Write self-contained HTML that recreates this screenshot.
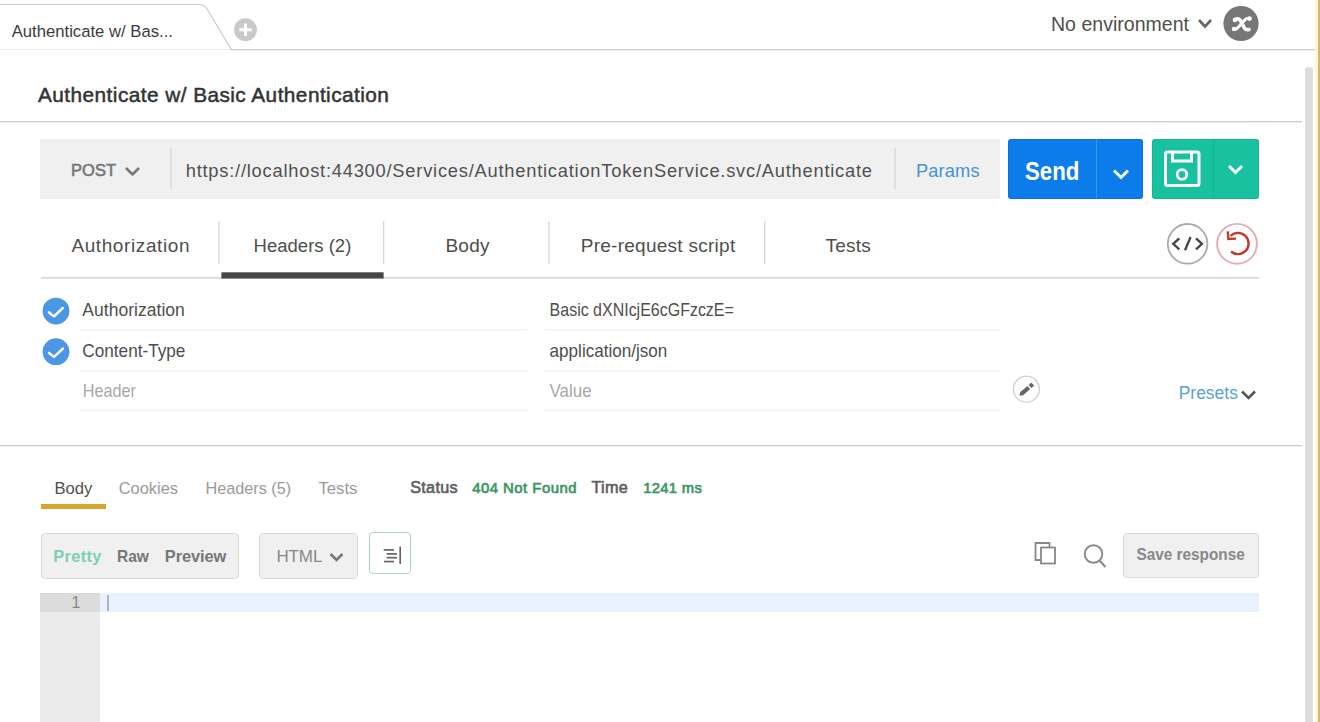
<!DOCTYPE html>
<html><head><meta charset="utf-8">
<style>
html,body{margin:0;padding:0;background:#fff;width:1320px;height:722px;overflow:hidden;position:relative}
.t{position:absolute;white-space:nowrap;line-height:1;font-family:"Liberation Sans",sans-serif}
.b{position:absolute}
.s{position:absolute}
</style></head><body>
<svg class="s" width="1320" height="722" style="left:0;top:0">
<path d="M0 49.5 L231 49.5" stroke="#ececec" stroke-width="1" fill="none"/>
<path d="M0 4.5 L200 4.5 Q204.5 4.8 207 9 L231.5 49.7 L1316 49.7" stroke="#c9c9c9" stroke-width="1.2" fill="none"/>
<circle cx="245.5" cy="29.7" r="11.5" fill="#c9c9c9"/>
<path d="M245.5 23.5 V35.9 M239.3 29.7 H251.7" stroke="#fff" stroke-width="3"/>
<path d="M1199 20 L1205 26.5 L1211 20" stroke="#666" stroke-width="2.6" fill="none"/>
<circle cx="1241" cy="23.5" r="17.6" fill="#767676"/>
<line x1="0" y1="121.7" x2="1302" y2="121.7" stroke="#c8c8c8" stroke-width="1.2"/>
<line x1="0" y1="445.7" x2="1302" y2="445.7" stroke="#c8c8c8" stroke-width="1.2"/>
</svg>
<svg class="s" width="1320" height="722" style="left:0;top:0">
<path d="M1235 19.5 Q1239.5 17.5 1241.5 22.5 L1244.5 28 Q1246 30.5 1249 29.5" stroke="#fff" stroke-width="3.6" fill="none" stroke-linecap="round"/>
<path d="M1249.5 18.5 Q1246.5 17.8 1244 20.8 L1238 27.5 Q1236 30 1233.8 29.2" stroke="#fff" stroke-width="3" fill="none" stroke-linecap="round"/>
<circle cx="1235" cy="20" r="2.3" fill="#fff"/><circle cx="1249.5" cy="18.6" r="2.4" fill="#fff"/><circle cx="1234" cy="29" r="2.2" fill="#fff"/>
</svg>
<div class="b" style="left:1305px;top:67px;width:8.299999999999955px;height:655px;background:#dddddd;border-radius:3px 3px 0 0"></div>
<div class="b" style="left:1315px;top:0px;width:3px;height:722px;background:#fbf6dc"></div>
<div class="b" style="left:1318px;top:0px;width:2px;height:722px;background:#d9b86c"></div>
<div class="b" style="left:40.3px;top:138.6px;width:959.5px;height:60.599999999999994px;background:#f0f0f0"></div>
<svg class="s" width="1320" height="722" style="left:0;top:0">
<path d="M126 168 L132.5 174.5 L139 168" stroke="#777" stroke-width="2.6" fill="none"/>
<line x1="171" y1="148" x2="171" y2="189" stroke="#d9d9d9" stroke-width="1.5"/>
<line x1="895" y1="148" x2="895" y2="189" stroke="#d9d9d9" stroke-width="1.5"/>
</svg>
<div class="b" style="left:1008px;top:139px;width:135.20000000000005px;height:60px;background:#0b7ce9;border-radius:3px;box-shadow:inset 0 0 0 1px rgba(0,40,90,0.12)"></div>
<div class="b" style="left:1096px;top:139px;width:1px;height:60px;background:#3a94ee"></div>
<div class="b" style="left:1152.4px;top:139px;width:106.39999999999986px;height:60px;background:#18c19f;border-radius:3px;box-shadow:inset 0 0 0 1px rgba(0,60,40,0.08)"></div>
<div class="b" style="left:1213px;top:139px;width:1px;height:60px;background:#14b393"></div>
<svg class="s" width="1320" height="722" style="left:0;top:0">
<path d="M1114 170.5 L1121 177.5 L1128 170.5" stroke="#fff" stroke-width="3" fill="none"/>
<path d="M1229 166 L1235.5 172.5 L1242 166" stroke="#fff" stroke-width="3" fill="none"/>
<rect x="1165.5" y="152" width="33.5" height="33.5" rx="2" stroke="#fff" stroke-width="3" fill="none"/>
<path d="M1172.5 152 V161 H1191.5 V152" stroke="#fff" stroke-width="3" fill="none"/>
<circle cx="1182" cy="174.5" r="4.8" stroke="#fff" stroke-width="2.8" fill="none"/>
</svg>
<svg class="s" width="1320" height="722" style="left:0;top:0">
<line x1="219" y1="221" x2="219" y2="264" stroke="#dcdcdc" stroke-width="1.5"/>
<line x1="383.6" y1="221" x2="383.6" y2="264" stroke="#dcdcdc" stroke-width="1.5"/>
<line x1="548.9" y1="221" x2="548.9" y2="264" stroke="#dcdcdc" stroke-width="1.5"/>
<line x1="764.8" y1="221" x2="764.8" y2="264" stroke="#dcdcdc" stroke-width="1.5"/>
<line x1="41" y1="277.8" x2="1259" y2="277.8" stroke="#cbcbcb" stroke-width="1.2"/>
<rect x="221.4" y="272.3" width="162.2" height="6.2" fill="#464646"/>
<circle cx="1187.6" cy="243.8" r="19.8" stroke="#ababab" stroke-width="1.8" fill="#fff"/>
<path d="M1179.3 238.3 L1173.2 243.8 L1179.3 249.3 M1196 238.3 L1202 243.8 L1196 249.3 M1190.6 237 L1185 250.3" stroke="#444" stroke-width="2.3" fill="none"/>
<circle cx="1237" cy="243.8" r="19.9" stroke="#e8abb3" stroke-width="1.9" fill="#fff"/>
<path d="M1230.5 236 A10.6 10.6 0 1 1 1231 251.5" stroke="#c4392c" stroke-width="2.4" fill="none"/>
<path d="M1227.8 231.3 L1228.4 239 L1236 238.6" stroke="#c4392c" stroke-width="2.4" fill="none"/>
</svg>
<svg class="s" width="1320" height="722" style="left:0;top:0">
<circle cx="56" cy="311.1" r="13.4" fill="#4b97e5"/>
<path d="M49 312.3 Q52 315.3 54.2 316.2 L62.8 308" stroke="#fff" stroke-width="2.5" fill="none" stroke-linecap="round"/>
<circle cx="56" cy="351.7" r="13.4" fill="#4b97e5"/>
<path d="M49 352.9 Q52 355.9 54.2 356.8 L62.8 348.6" stroke="#fff" stroke-width="2.5" fill="none" stroke-linecap="round"/>
<g stroke="#f2f2f2" stroke-width="1.4">
<line x1="80" y1="330" x2="527.6" y2="330"/><line x1="544.3" y1="330" x2="1000" y2="330"/>
<line x1="80" y1="371" x2="527.6" y2="371"/><line x1="544.3" y1="371" x2="1000" y2="371"/>
<line x1="80" y1="410.5" x2="527.6" y2="410.5"/><line x1="544.3" y1="410.5" x2="1000" y2="410.5"/>
</g>
<circle cx="1026.4" cy="389.2" r="13" stroke="#cfcfcf" stroke-width="1.3" fill="#fff"/>
<g transform="translate(1019.3 395.8) rotate(-41)" fill="#666">
<path d="M0 0 L3.2 -2.1 L12.6 -2.1 L12.6 2.1 L3.2 2.1 Z"/>
<rect x="14.2" y="-2.1" width="3.6" height="4.2"/>
</g>
<path d="M1242 391.5 L1248.5 398 L1255 391.5" stroke="#555" stroke-width="2.6" fill="none"/>
</svg>
<div class="b" style="left:41px;top:503.5px;width:64.6px;height:5.800000000000011px;background:#d6a52a"></div>
<div class="b" style="left:40.5px;top:532.5px;width:198.0px;height:46.799999999999955px;background:#f0f0f0;border:1.3px solid #d9d9d9;border-radius:4px;box-sizing:border-box"></div>
<div class="b" style="left:259.4px;top:532.5px;width:98.80000000000001px;height:46.799999999999955px;background:#f0f0f0;border:1.3px solid #d9d9d9;border-radius:4px;box-sizing:border-box"></div>
<div class="b" style="left:369.3px;top:531.8px;width:42.19999999999999px;height:42.0px;background:#fff;border:1.8px solid #a6d5ca;border-radius:4px;box-sizing:border-box"></div>
<svg class="s" width="1320" height="722" style="left:0;top:0">
<path d="M330.5 554 L336.5 560 L342.5 554" stroke="#777" stroke-width="2.6" fill="none"/>
<g stroke="#666" stroke-width="1.7">
<line x1="383.7" y1="549.9" x2="394" y2="549.9"/>
<line x1="386.6" y1="553.9" x2="397" y2="553.9"/>
<line x1="386.6" y1="557.7" x2="397" y2="557.7"/>
<line x1="384" y1="561.6" x2="394" y2="561.6"/>
<line x1="400.2" y1="546.5" x2="400.2" y2="564"/>
</g>
<g stroke="#888" stroke-width="1.8" fill="#fff">
<path d="M1040.5 560 H1035.5 V543 H1049.5 V547"/>
<rect x="1041" y="547.5" width="14" height="16"/>
</g>
<circle cx="1093.5" cy="554" r="8.8" stroke="#888" stroke-width="1.9" fill="none"/>
<path d="M1099.5 560.5 L1105.5 567" stroke="#888" stroke-width="2" fill="none"/>
</svg>
<div class="b" style="left:1122.8px;top:532.6px;width:135.79999999999995px;height:45.10000000000002px;background:#f0f0f0;border:1.3px solid #d9d9d9;border-radius:4px;box-sizing:border-box"></div>
<div class="b" style="left:40px;top:592.7px;width:60.3px;height:129.29999999999995px;background:#ebebeb"></div>
<div class="b" style="left:40px;top:592.7px;width:60.3px;height:19.699999999999932px;background:#dcdcdc"></div>
<div class="b" style="left:100.3px;top:592.7px;width:1158.7px;height:19.699999999999932px;background:#e8f1fd"></div>
<div class="b" style="left:107.2px;top:595px;width:1.7999999999999972px;height:16px;background:#aab3d3"></div>
<svg class="s" width="1320" height="722" style="left:0;top:0;font-family:'Liberation Sans',sans-serif">
<text x="0" y="0" transform="translate(11.70 36.90) scale(0.9639 1)" font-size="17.3" font-weight="400" fill="#3c3c3c" letter-spacing="0.000">Authenticate w/ Bas...</text>
<text x="1051.00" y="30.70" font-size="19.5" font-weight="400" fill="#4e4e4e" letter-spacing="0.025">No environment</text>
<text x="38.00" y="101.80" font-size="20.8" font-weight="400" fill="#333" letter-spacing="0.447" stroke="#333" stroke-width="0.5">Authenticate w/ Basic Authentication</text>
<text x="71.00" y="175.80" font-size="16.5" font-weight="400" fill="#777" letter-spacing="0.026" stroke="#777" stroke-width="0.6">POST</text>
<text x="185.70" y="176.70" font-size="18.3" font-weight="400" fill="#505050" letter-spacing="0.777">https://localhost:44300/Services/AuthenticationTokenService.svc/Authenticate</text>
<text x="916.00" y="176.70" font-size="18.3" font-weight="400" fill="#4a90d0" letter-spacing="0.111">Params</text>
<text x="0" y="0" transform="translate(1025.00 179.60) scale(0.8900 1)" font-size="25" font-weight="700" fill="#fff" letter-spacing="0.000">Send</text>
<text x="71.40" y="252.00" font-size="19" font-weight="400" fill="#4e4e4e" letter-spacing="0.599">Authorization</text>
<text x="0" y="0" transform="translate(253.60 252.00) scale(0.9749 1)" font-size="19" font-weight="400" fill="#4e4e4e" letter-spacing="0.000">Headers (2)</text>
<text x="445.50" y="252.00" font-size="19" font-weight="400" fill="#4e4e4e" letter-spacing="0.193">Body</text>
<text x="580.70" y="252.00" font-size="19" font-weight="400" fill="#4e4e4e" letter-spacing="0.267">Pre-request script</text>
<text x="825.40" y="252.00" font-size="19" font-weight="400" fill="#4e4e4e" letter-spacing="0.259">Tests</text>
<text x="82.30" y="315.80" font-size="17.5" font-weight="400" fill="#4e4e4e" letter-spacing="0.029">Authorization</text>
<text x="0" y="0" transform="translate(82.30 357.00) scale(0.9824 1)" font-size="17.5" font-weight="400" fill="#4e4e4e" letter-spacing="0.000">Content-Type</text>
<text x="0" y="0" transform="translate(82.70 396.60) scale(0.9286 1)" font-size="17.5" font-weight="400" fill="#a8a8a8" letter-spacing="0.000">Header</text>
<text x="0" y="0" transform="translate(549.60 315.80) scale(0.9137 1)" font-size="17.5" font-weight="400" fill="#4e4e4e" letter-spacing="0.000">Basic dXNIcjE6cGFzczE=</text>
<text x="0" y="0" transform="translate(549.60 357.00) scale(0.9763 1)" font-size="17.5" font-weight="400" fill="#4e4e4e" letter-spacing="0.000">application/json</text>
<text x="0" y="0" transform="translate(549.60 396.60) scale(0.9668 1)" font-size="17.5" font-weight="400" fill="#a8a8a8" letter-spacing="0.000">Value</text>
<text x="0" y="0" transform="translate(1178.70 398.90) scale(0.9702 1)" font-size="18" font-weight="400" fill="#5b9fd6" letter-spacing="0.000">Presets</text>
<text x="0" y="0" transform="translate(54.40 494.20) scale(0.9664 1)" font-size="17.2" font-weight="400" fill="#4e4e4e" letter-spacing="0.000">Body</text>
<text x="0" y="0" transform="translate(118.80 494.20) scale(0.9528 1)" font-size="17.2" font-weight="400" fill="#9a9a9a" letter-spacing="0.000">Cookies</text>
<text x="0" y="0" transform="translate(205.50 494.20) scale(0.9437 1)" font-size="17.2" font-weight="400" fill="#9a9a9a" letter-spacing="0.000">Headers (5)</text>
<text x="0" y="0" transform="translate(318.50 494.20) scale(0.9711 1)" font-size="17.2" font-weight="400" fill="#9a9a9a" letter-spacing="0.000">Tests</text>
<text x="410.20" y="493.40" font-size="16.2" font-weight="400" fill="#5e5e5e" letter-spacing="0.315" stroke="#5e5e5e" stroke-width="0.6">Status</text>
<text x="472.20" y="493.30" font-size="14.9" font-weight="400" fill="#3a9660" letter-spacing="0.478" stroke="#3a9660" stroke-width="0.65">404 Not Found</text>
<text x="591.50" y="493.40" font-size="16.2" font-weight="400" fill="#5e5e5e" letter-spacing="0.334" stroke="#5e5e5e" stroke-width="0.6">Time</text>
<text x="643.20" y="493.30" font-size="14.8" font-weight="400" fill="#3a9660" letter-spacing="0.307" stroke="#3a9660" stroke-width="0.65">1241 ms</text>
<text x="53.30" y="562.40" font-size="16.4" font-weight="700" fill="#7dcfb6" letter-spacing="0.341">Pretty</text>
<text x="0" y="0" transform="translate(117.00 562.40) scale(0.9483 1)" font-size="16.4" font-weight="700" fill="#777" letter-spacing="0.000">Raw</text>
<text x="164.80" y="562.40" font-size="16.4" font-weight="700" fill="#777" letter-spacing="-0.072">Preview</text>
<text x="276.40" y="562.40" font-size="17" font-weight="400" fill="#888" letter-spacing="-0.094">HTML</text>
<text x="0" y="0" transform="translate(1136.50 560.40) scale(0.9587 1)" font-size="16" font-weight="700" fill="#888" letter-spacing="0.000">Save response</text>
<text x="71.50" y="608.00" font-size="16" font-weight="400" fill="#888" letter-spacing="0.000">1</text>
</svg>
</body></html>
